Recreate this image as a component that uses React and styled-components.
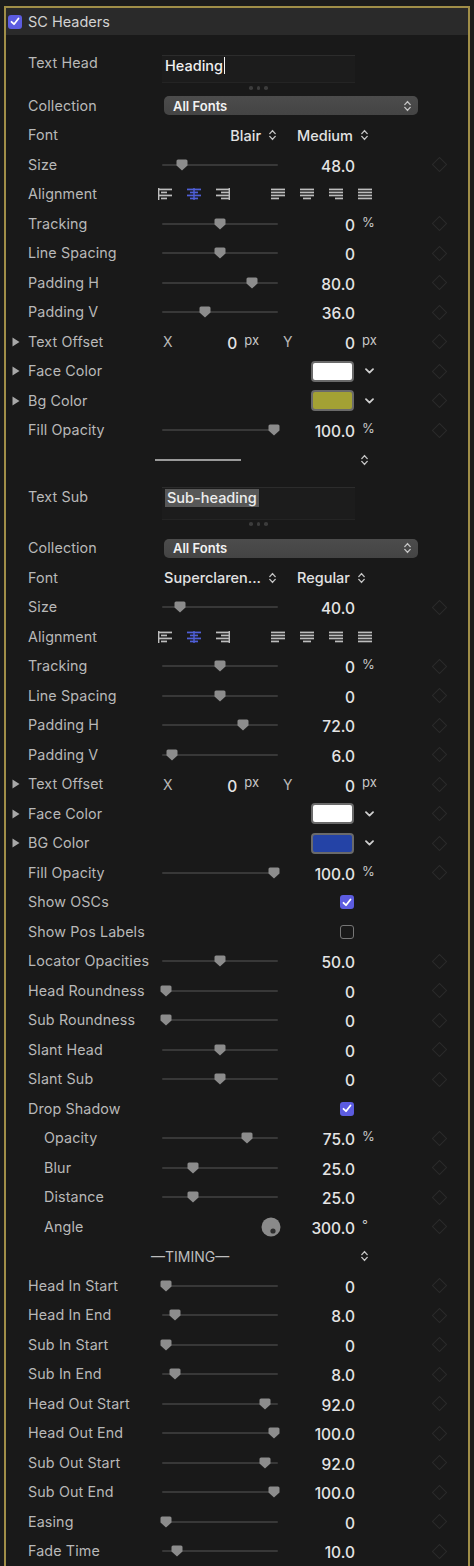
import React from 'react';
import styled, { createGlobalStyle } from 'styled-components';

const GlobalStyle = createGlobalStyle`
  html, body { margin: 0; padding: 0; background: #1c1c1c; }
  body {
    font-family: Inter, "Noto Sans", "Liberation Sans", sans-serif;
    -webkit-font-smoothing: antialiased;
  }
`;

const Panel = styled.div`
  margin: 6px 4px 0;
  height: 1560px;
  box-sizing: border-box;
  border: 2px solid #a08e48;
  border-bottom: none;
  background: #191919;
  overflow: hidden;
`;

const Header = styled.div`
  height: 27px;
  display: flex;
  align-items: center;
  gap: 6px;
  padding-left: 2px;
  background: #2a2a2a;
  color: #d2d2d2;
  font-size: 14.5px;
`;

const Box = styled.span`
  width: 14px;
  height: 14px;
  box-sizing: border-box;
  border-radius: 3px;
  display: inline-flex;
  align-items: center;
  justify-content: center;
  background: ${p => (p.$on ? '#5c5ce0' : 'transparent')};
  border: ${p => (p.$on ? 'none' : '1.5px solid #767676')};
`;

const Row = styled.div`
  display: grid;
  grid-template-columns: 16px 134px 116px 77px 26px 1fr 14px;
  align-items: ${p => (p.$top ? 'start' : 'center')};
  height: ${p => p.$h || 29.5}px;
  padding: 0 22px 0 6px;
  box-sizing: border-box;
`;

const Label = styled.div`
  grid-column: 2;
  color: #b8b8b8;
  font-size: 14.3px;
  letter-spacing: 0.12px;
  line-height: 18px;
  white-space: nowrap;
  padding-left: ${p => (p.$indent ? 16 : 0)}px;
  margin-top: ${p => p.$mt || 0}px;
`;

const Disclosure = styled.svg`
  grid-column: 1;
`;

const SliderWrap = styled.div`
  grid-column: 3;
  position: relative;
  height: 14px;
`;

const Track = styled.div`
  position: absolute;
  left: 0;
  right: 0;
  top: 6px;
  height: 2px;
  background: #383838;
  border-radius: 1px;
`;

const Thumb = styled.svg`
  position: absolute;
  top: 1px;
`;

const Value = styled.div`
  grid-column: 4;
  text-align: right;
  color: #e4e4e4;
  font-size: 15.5px;
  font-weight: 500;
  line-height: 18px;
  padding-top: 4px;
`;

const Unit = styled.div`
  grid-column: 5;
  padding-left: 7px;
  color: #c8c8c8;
  font-size: 13px;
  line-height: 14px;
  margin-bottom: 4px;
`;

const Diamond = styled.div`
  grid-column: 7;
  justify-self: center;
  width: 9px;
  height: 9px;
  border: 1px solid #2b2b2b;
  transform: rotate(45deg);
`;

const FieldCol = styled.div`
  grid-column: 3 / 5;
  display: flex;
  flex-direction: column;
  align-items: center;
  margin-top: ${p => p.$mt}px;
`;

const TextField = styled.div`
  align-self: stretch;
  height: ${p => p.$h}px;
  box-sizing: border-box;
  background: #1c1c1c;
  border-top: 1px solid #2c2c2c;
  border-bottom: 1px solid #242424;
  padding: 1px 3px 0;
  color: #f0f0f0;
  font-size: 14.5px;
  font-weight: 500;
  line-height: 18px;
  display: flex;
  align-items: flex-start;
`;

const Caret = styled.span`
  display: inline-block;
  width: 1px;
  height: 17px;
  background: #f4f4f4;
  margin-left: 1px;
`;

const Selected = styled.span`
  background: #575757;
  padding: 0 2px;
  color: #eeeeee;
`;

const Dots = styled.div`
  display: flex;
  gap: 4px;
  margin-top: ${p => p.$mt}px;
  span {
    width: 3.5px;
    height: 3.5px;
    border-radius: 50%;
    background: #3c3c3c;
  }
`;

const PopupBar = styled.div`
  grid-column: 3 / 7;
  margin-left: 2px;
  width: 254px;
  height: 19px;
  box-sizing: border-box;
  border-radius: 5px;
  background: linear-gradient(#4c4c4c, #444444);
  display: flex;
  align-items: center;
  justify-content: space-between;
  padding: 0 7px 0 9px;
  color: #f2f2f2;
  font-size: 13px;
  font-weight: 600;
`;

const PopText = styled.div`
  grid-column: ${p => p.$col};
  display: flex;
  align-items: center;
  justify-content: ${p => (p.$end ? 'flex-end' : 'flex-start')};
  gap: 8px;
  padding: ${p => (p.$end ? '0 2px 0 0' : '0 0 0 19px')};
  color: #e2e2e2;
  font-size: 14.5px;
  font-weight: 500;
  white-space: nowrap;
`;

const AlignGroup = styled.div`
  grid-column: 3 / 6;
  margin-left: -4px;
  display: flex;
  align-items: center;
  gap: 15px;
`;

const AlignGap = styled.span`
  width: 11px;
`;

const Offset = styled.div`
  grid-column: ${p => p.$col};
  display: flex;
  align-items: center;
  padding: ${p => p.$pad};
  color: #b8b8b8;
  font-size: 14px;
`;

const OffsetNum = styled.span`
  margin-left: auto;
  color: #e4e4e4;
  font-size: 15.5px;
  font-weight: 500;
  padding-top: 4px;
`;

const OffsetUnit = styled.span`
  color: #c8c8c8;
  font-size: 13px;
  margin: 0 0 4px 7px;
`;

const Swatch = styled.div`
  grid-column: 4;
  justify-self: end;
  margin-right: 1px;
  width: 43px;
  height: 21px;
  box-sizing: border-box;
  border: 2px solid #6a6a6a;
  border-radius: 4px;
  background: ${p => p.$color};
`;

const IconCell = styled.div`
  grid-column: ${p => p.$col};
  display: flex;
  align-items: center;
  padding-left: ${p => p.$pl || 0}px;
  justify-self: ${p => (p.$end ? 'end' : 'start')};
  margin-right: ${p => p.$mr || 0}px;
`;

const Rule = styled.div`
  grid-column: 3;
  margin-left: -7px;
  width: 86px;
  height: 2px;
  background: #9a9a9a;
`;

const Section = styled.div`
  grid-column: 3;
  margin-left: -11px;
  color: #bdbdbd;
  font-size: 14px;
  white-space: nowrap;
`;

const Check = () => (
  <svg width="10" height="9" viewBox="0 0 10 9">
    <path d="M1.5 4.8 L4 7.2 L8.5 1.5" fill="none" stroke="#fff" strokeWidth="1.8" strokeLinecap="round" strokeLinejoin="round" />
  </svg>
);

const UpDown = () => (
  <svg width="7" height="12" viewBox="0 0 7 12">
    <path d="M0.8 4.6 L3.5 1.6 L6.2 4.6 M0.8 7.4 L3.5 10.4 L6.2 7.4" fill="none" stroke="#c4c4c4" strokeWidth="1.4" strokeLinecap="round" strokeLinejoin="round" />
  </svg>
);

const ChevronDown = () => (
  <svg width="9" height="6" viewBox="0 0 9 6">
    <path d="M1 1.2 L4.5 4.6 L8 1.2" fill="none" stroke="#cfcfcf" strokeWidth="1.8" strokeLinecap="round" strokeLinejoin="round" />
  </svg>
);

const Triangle = () => (
  <Disclosure width="8" height="10" viewBox="0 0 8 10">
    <path d="M0.5 0.5 L7.5 5 L0.5 9.5 Z" fill="#a8a8a8" />
  </Disclosure>
);

const Slider = ({ t }) => (
  <SliderWrap>
    <Track />
    <Thumb width="12" height="12" viewBox="0 0 12 12" style={{ left: `${t * 108 - 2}px` }}>
      <path d="M2 0.5 H10 A1.5 1.5 0 0 1 11.5 2 V6.6 L6 11.5 L0.5 6.6 V2 A1.5 1.5 0 0 1 2 0.5 Z" fill="#8c8c8c" />
    </Thumb>
  </SliderWrap>
);

// line spans per alignment icon; bar = position of the vertical edge line
const alignIcons = [
  { bar: 0, lines: [[0, 14], [3, 9], [0, 14], [3, 9]] },
  { bar: 7, lines: [[0, 14], [3, 11], [0, 14], [3, 11]] },
  { bar: 14, lines: [[0, 14], [5, 14], [0, 14], [5, 14]] },
  { lines: [[0, 14], [0, 14], [0, 14], [0, 8]] },
  { lines: [[0, 14], [0, 14], [0, 14], [3, 11]] },
  { lines: [[0, 14], [0, 14], [0, 14], [6, 14]] },
  { lines: [[0, 14], [0, 14], [0, 14], [0, 14]] },
];

const AlignIcon = ({ icon, active }) => {
  const c = active ? '#4f5fd8' : '#bdbdbd';
  return (
    <svg width="14" height="12" viewBox="0 0 14 12">
      {icon.lines.map(([a, b], i) => (
        <rect key={i} x={a} y={0.6 + i * 3} width={b - a} height="1.7" fill={c} />
      ))}
      {icon.bar !== undefined && (
        <rect x={Math.min(Math.max(icon.bar - 0.7, 0), 12.6)} y="0" width="1.4" height="12" fill={c} />
      )}
    </svg>
  );
};

const renderRow = (r, i) => {
  switch (r.type) {
    case 'text':
      return (
        <Row key={i} $top $h={r.h}>
          <Label $mt={r.lmt}>{r.label}</Label>
          <FieldCol $mt={r.fmt}>
            <TextField $h={r.fh}>
              {r.selected ? <Selected>{r.value}</Selected> : <>{r.value}<Caret /></>}
            </TextField>
            <Dots $mt={r.dmt}><span /><span /><span /></Dots>
          </FieldCol>
        </Row>
      );
    case 'popup':
      return (
        <Row key={i}>
          <Label>{r.label}</Label>
          <PopupBar>{r.value}<UpDown /></PopupBar>
        </Row>
      );
    case 'font':
      return (
        <Row key={i}>
          <Label>{r.label}</Label>
          <PopText $col="3" $end>{r.family}<UpDown /></PopText>
          <PopText $col="4 / 6">{r.weight}<UpDown /></PopText>
        </Row>
      );
    case 'align':
      return (
        <Row key={i}>
          <Label>{r.label}</Label>
          <AlignGroup>
            {alignIcons.slice(0, 3).map((ic, k) => <AlignIcon key={k} icon={ic} active={k === 1} />)}
            <AlignGap />
            {alignIcons.slice(3).map((ic, k) => <AlignIcon key={k} icon={ic} />)}
          </AlignGroup>
        </Row>
      );
    case 'offset':
      return (
        <Row key={i}>
          <Triangle />
          <Label>{r.label}</Label>
          <Offset $col="3" $pad="0 19px 0 1px">X<OffsetNum>0</OffsetNum><OffsetUnit>px</OffsetUnit></Offset>
          <Offset $col="4" $pad="0 0 0 5px">Y<OffsetNum>0</OffsetNum></Offset>
          <Unit>px</Unit>
          <Diamond />
        </Row>
      );
    case 'color':
      return (
        <Row key={i}>
          <Triangle />
          <Label>{r.label}</Label>
          <Swatch $color={r.color} />
          <IconCell $col="5" $pl={10}><ChevronDown /></IconCell>
          <Diamond />
        </Row>
      );
    case 'sep':
      return (
        <Row key={i}>
          <Rule />
          <IconCell $col="5" $pl={6}><UpDown /></IconCell>
        </Row>
      );
    case 'section':
      return (
        <Row key={i}>
          <Section>—TIMING—</Section>
          <IconCell $col="5" $pl={6}><UpDown /></IconCell>
        </Row>
      );
    case 'check':
      return (
        <Row key={i}>
          <Label>{r.label}</Label>
          <IconCell $col="4" $end $mr={1}>
            <Box $on={r.on}>{r.on && <Check />}</Box>
          </IconCell>
        </Row>
      );
    case 'angle':
      return (
        <Row key={i}>
          <Label $indent>{r.label}</Label>
          <IconCell $col="3" $end $mr={-3}>
            <svg width="20" height="20" viewBox="0 0 20 20">
              <circle cx="10" cy="10" r="9.5" fill="#8a8a8a" />
              <circle cx="12" cy="14" r="2.6" fill="#2e2e2e" />
            </svg>
          </IconCell>
          <Value>{r.value}</Value>
          <Unit>°</Unit>
          <Diamond />
        </Row>
      );
    default:
      return (
        <Row key={i}>
          <Label $indent={r.indent}>{r.label}</Label>
          <Slider t={r.t} />
          <Value>{r.value}</Value>
          {r.unit && <Unit>{r.unit}</Unit>}
          <Diamond />
        </Row>
      );
  }
};

const rows = [
  { type: 'text', label: 'Text Head', value: 'Heading', h: 56, lmt: 19, fmt: 20, fh: 28, dmt: 3 },
  { type: 'popup', label: 'Collection', value: 'All Fonts' },
  { type: 'font', label: 'Font', family: 'Blair', weight: 'Medium' },
  { type: 'slider', label: 'Size', t: 0.148, value: '48.0' },
  { type: 'align', label: 'Alignment' },
  { type: 'slider', label: 'Tracking', t: 0.5, value: '0', unit: '%' },
  { type: 'slider', label: 'Line Spacing', t: 0.5, value: '0' },
  { type: 'slider', label: 'Padding H', t: 0.796, value: '80.0' },
  { type: 'slider', label: 'Padding V', t: 0.361, value: '36.0' },
  { type: 'offset', label: 'Text Offset' },
  { type: 'color', label: 'Face Color', color: '#ffffff' },
  { type: 'color', label: 'Bg Color', color: '#a3a134' },
  { type: 'slider', label: 'Fill Opacity', t: 1, value: '100.0', unit: '%' },
  { type: 'sep' },
  { type: 'text', label: 'Text Sub', value: 'Sub-heading', selected: true, h: 58.75, lmt: 13, fmt: 12.5, fh: 33, dmt: 2 },
  { type: 'popup', label: 'Collection', value: 'All Fonts' },
  { type: 'font', label: 'Font', family: 'Superclaren...', weight: 'Regular' },
  { type: 'slider', label: 'Size', t: 0.13, value: '40.0' },
  { type: 'align', label: 'Alignment' },
  { type: 'slider', label: 'Tracking', t: 0.5, value: '0', unit: '%' },
  { type: 'slider', label: 'Line Spacing', t: 0.5, value: '0' },
  { type: 'slider', label: 'Padding H', t: 0.713, value: '72.0' },
  { type: 'slider', label: 'Padding V', t: 0.056, value: '6.0' },
  { type: 'offset', label: 'Text Offset' },
  { type: 'color', label: 'Face Color', color: '#ffffff' },
  { type: 'color', label: 'BG Color', color: '#2443a6' },
  { type: 'slider', label: 'Fill Opacity', t: 1, value: '100.0', unit: '%' },
  { type: 'check', label: 'Show OSCs', on: true },
  { type: 'check', label: 'Show Pos Labels', on: false },
  { type: 'slider', label: 'Locator Opacities', t: 0.5, value: '50.0' },
  { type: 'slider', label: 'Head Roundness', t: 0, value: '0' },
  { type: 'slider', label: 'Sub Roundness', t: 0, value: '0' },
  { type: 'slider', label: 'Slant Head', t: 0.5, value: '0' },
  { type: 'slider', label: 'Slant Sub', t: 0.5, value: '0' },
  { type: 'check', label: 'Drop Shadow', on: true },
  { type: 'slider', label: 'Opacity', indent: true, t: 0.75, value: '75.0', unit: '%' },
  { type: 'slider', label: 'Blur', indent: true, t: 0.25, value: '25.0' },
  { type: 'slider', label: 'Distance', indent: true, t: 0.25, value: '25.0' },
  { type: 'angle', label: 'Angle', value: '300.0' },
  { type: 'section' },
  { type: 'slider', label: 'Head In Start', t: 0, value: '0' },
  { type: 'slider', label: 'Head In End', t: 0.083, value: '8.0' },
  { type: 'slider', label: 'Sub In Start', t: 0, value: '0' },
  { type: 'slider', label: 'Sub In End', t: 0.083, value: '8.0' },
  { type: 'slider', label: 'Head Out Start', t: 0.917, value: '92.0' },
  { type: 'slider', label: 'Head Out End', t: 1, value: '100.0' },
  { type: 'slider', label: 'Sub Out Start', t: 0.917, value: '92.0' },
  { type: 'slider', label: 'Sub Out End', t: 1, value: '100.0' },
  { type: 'slider', label: 'Easing', t: 0, value: '0' },
  { type: 'slider', label: 'Fade Time', t: 0.1, value: '10.0' },
];

export default function App() {
  return (
    <>
      <GlobalStyle />
      <Panel>
        <Header>
          <Box $on><Check /></Box>
          SC Headers
        </Header>
        {rows.map(renderRow)}
      </Panel>
    </>
  );
}
